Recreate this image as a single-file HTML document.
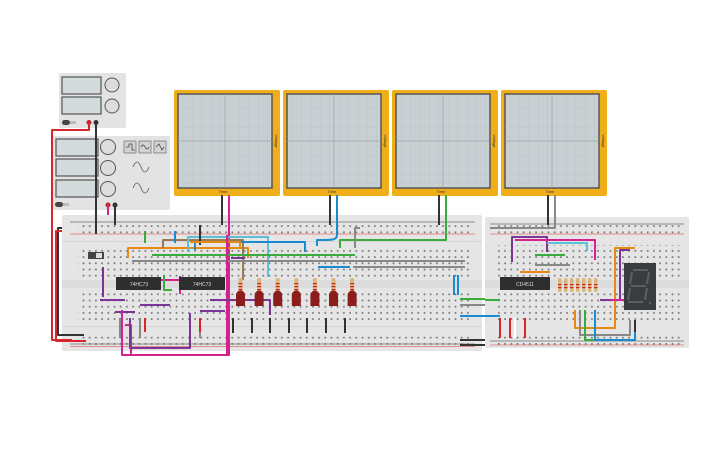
<!DOCTYPE html>
<html><head><meta charset="utf-8"><style>
html,body{margin:0;padding:0;background:#fff;width:725px;height:453px;overflow:hidden}
svg{display:block}
text{font-family:"Liberation Sans",sans-serif}
</style></head><body>
<svg width="725" height="453" viewBox="0 0 725 453" xmlns="http://www.w3.org/2000/svg">
<defs>
<pattern id="h" x="0" y="0" width="6.2" height="6.2" patternUnits="userSpaceOnUse"><rect x="2.1" y="2.1" width="1.6" height="1.6" fill="#6a6a6a"/></pattern>
<pattern id="g" x="0" y="0" width="9.4" height="9.4" patternUnits="userSpaceOnUse"><path d="M9.4 0V9.4H0" fill="none" stroke="#b2bbbd" stroke-width="0.5"/></pattern>
<g id="scope">
<rect x="0" y="0" width="106" height="106" rx="2" fill="#f0ae19"/>
<rect x="4" y="4" width="94" height="94" fill="#c8d0d3" stroke="#555" stroke-width="1.5"/>
<rect x="4" y="4" width="94" height="94" fill="url(#g)"/>
<path d="M51 4V98M4 51H98" stroke="#98a3a6" stroke-width="0.7"/>
<text x="49" y="103" font-size="4" fill="#333" text-anchor="middle">Time</text>
<text x="101" y="51" font-size="4" fill="#333" transform="rotate(90 101 51)" text-anchor="middle">Voltage</text>
</g>
</defs>

<!-- power supply -->
<rect x="59" y="73" width="67" height="55" rx="2" fill="#e3e3e3"/>
<rect x="62" y="77" width="39" height="17" fill="#d3dbdd" stroke="#555" stroke-width="1.2"/>
<rect x="62" y="97" width="39" height="17" fill="#d3dbdd" stroke="#555" stroke-width="1.2"/>
<circle cx="112" cy="85" r="7" fill="#ddd" stroke="#555"/>
<circle cx="112" cy="106" r="7" fill="#ddd" stroke="#555"/>
<rect x="62" y="120" width="8" height="5" rx="2.5" fill="#444"/><rect x="70" y="121" width="6" height="3" fill="#bbb"/>
<circle cx="89" cy="122.5" r="2.5" fill="#c0272d"/><circle cx="96" cy="122.5" r="2.5" fill="#333"/>

<!-- function generator -->
<rect x="52" y="136" width="118" height="74" rx="2" fill="#e3e3e3"/>
<rect x="56" y="139" width="42" height="17" fill="#d3dbdd" stroke="#555" stroke-width="1.2"/>
<rect x="56" y="159" width="42" height="17" fill="#d3dbdd" stroke="#555" stroke-width="1.2"/>
<rect x="56" y="180" width="42" height="17" fill="#d3dbdd" stroke="#555" stroke-width="1.2"/>
<circle cx="108" cy="147" r="7.5" fill="#ddd" stroke="#555"/>
<circle cx="108" cy="168" r="7.5" fill="#ddd" stroke="#555"/>
<circle cx="108" cy="189" r="7.5" fill="#ddd" stroke="#555"/>
<rect x="124" y="141" width="12" height="12" fill="#d3d3d3" stroke="#777" stroke-width="0.8"/>
<rect x="139" y="141" width="12" height="12" fill="#d3d3d3" stroke="#777" stroke-width="0.8"/>
<rect x="154" y="141" width="12" height="12" fill="#d3d3d3" stroke="#777" stroke-width="0.8"/>
<path d="M126 147h3v-3h3v6h3M141 147q2-4 4 0t4 0M156 147l3-3 3 6 2-3" fill="none" stroke="#444" stroke-width="0.8"/>
<path d="M133 167q4-10 8 0t8 0M133 188q4-10 8 0t8 0" fill="none" stroke="#555" stroke-width="0.8"/>
<rect x="55" y="202" width="8" height="5" rx="2.5" fill="#444"/><rect x="63" y="203" width="6" height="3" fill="#bbb"/>
<circle cx="108" cy="205" r="2.5" fill="#c0272d"/><circle cx="115" cy="205" r="2.5" fill="#333"/>

<!-- scopes -->
<use href="#scope" x="174" y="90"/>
<use href="#scope" x="283" y="90"/>
<use href="#scope" x="392" y="90"/>
<use href="#scope" x="501" y="90"/>

<!-- breadboard 1 -->
<rect x="62" y="215" width="420" height="136" rx="2" fill="#e5e5e5"/>
<rect x="62" y="241" width="420" height="1" fill="#d5d5d5"/>
<rect x="62" y="280" width="420" height="8" fill="#dcdcdc"/>
<rect x="62" y="326" width="420" height="1" fill="#d5d5d5"/>
<path d="M70 222H475M70 344H475" stroke="#333" stroke-width="0.6"/>
<path d="M70 234H475M70 346.5H475" stroke="#d33" stroke-width="0.6"/>
<rect x="78" y="222" width="392" height="12" fill="url(#h)"/>
<rect x="78" y="246" width="392" height="31" fill="url(#h)"/>
<rect x="78" y="289" width="392" height="31" fill="url(#h)"/>
<rect x="78" y="333" width="392" height="12" fill="url(#h)"/>

<!-- breadboard 2 -->
<rect x="485" y="217" width="204" height="131" rx="2" fill="#e5e5e5"/>
<rect x="485" y="280" width="204" height="8" fill="#dcdcdc"/>
<path d="M490 224H684M490 341H684" stroke="#333" stroke-width="0.6"/>
<path d="M490 234H684M490 345H684" stroke="#d33" stroke-width="0.6"/>
<rect x="495" y="222" width="185" height="12" fill="url(#h)"/>
<rect x="495" y="245" width="185" height="32" fill="url(#h)"/>
<rect x="495" y="290" width="185" height="32" fill="url(#h)"/>
<rect x="495" y="334" width="185" height="12" fill="url(#h)"/>

<g fill="none" stroke-width="2" stroke-linejoin="round">
<!-- supply wires -->
<path d="M89 122v8H52v210h20" stroke="#d8262d"/>
<path d="M96 122v112" stroke="#333"/>
<path d="M108 205v150h-80" stroke="#d4238f" opacity="0"/>
<path d="M108 205v10" stroke="#d4238f"/>
<path d="M115 205v20" stroke="#333"/>
<path d="M62 228H58v107h26" stroke="#333"/>
<path d="M62 231H56v110h30" stroke="#d8262d"/>
<!-- scope probes -->
<path d="M222 195v30" stroke="#333"/><path d="M229 195v160h-98v-30h-6" stroke="#d4238f"/>
<path d="M330 195v30" stroke="#333"/><path d="M337 195v40c0 5-5 5-15 5h-5v6" stroke="#1b8ad0"/>
<path d="M439 195v30" stroke="#333"/><path d="M446 195v45H340v8" stroke="#3aab3d"/>
<path d="M548 195v30" stroke="#333"/><path d="M555 195v33H490" stroke="#888"/>
<!-- colored jumpers bb1 -->
<path d="M128 258v-10h120v10" stroke="#e88a12"/>
<path d="M163 248v-8h80v40" stroke="#9a7a55"/>
<path d="M188 252v-15h80v40" stroke="#5bbfd8"/>
<path d="M195 250v-8h110v10" stroke="#1b8ad0"/>
<path d="M145 231v12" stroke="#3aab3d"/>
<path d="M175 231v12" stroke="#1b8ad0"/>
<path d="M200 225v20" stroke="#333"/>
<path d="M152 255H355" stroke="#3aab3d"/>
<path d="M132 261H355" stroke="#888"/>
<path d="M355 261H465" stroke="#888"/>
<path d="M318 267H350" stroke="#1b8ad0"/>
<path d="M353 267H465" stroke="#888"/>
<path d="M355 248v-20h5" stroke="#888"/>
<path d="M240 247v-5h-50" stroke="#e88a12"/>
<path d="M103 267v30" stroke="#7b3596"/>
<path d="M100 300h25M140 305h30M200 311h25M115 312h20" stroke="#7b3596"/>
<path d="M130 318v30h60v-35" stroke="#7b3596"/>
<path d="M122 310v45h105v-120" stroke="#d4238f"/>
<path d="M120 318v20M140 318v20M200 318v20" stroke="#888"/>
<path d="M145 318v14M200 318v14" stroke="#d8262d"/>
<path d="M160 280h20M180 276v18" stroke="#d4238f"/>
<path d="M164 275v15h8" stroke="#3aab3d"/>
<path d="M231 258H245" stroke="#7b3596"/>
<path d="M210 300H270v15" stroke="#7b3596"/>
<path d="M233 318v15M252 318v15M270 318v15M289 318v15M307 318v15M326 318v15M345 318v15" stroke="#333"/>
<path d="M454 275v20M458 275v20" stroke="#1b8ad0"/>
<path d="M460 299h25M460 305h25M460 316h25" stroke="#3aab3d"/>
<path d="M460 305h25" stroke="#888"/>
<path d="M460 316h25" stroke="#1b8ad0"/>
<path d="M460 340h25M460 345h25" stroke="#333"/>
<!-- bb2 wires -->
<path d="M512 262v-25h35v15" stroke="#7b3596"/>
<path d="M515 240h80v20" stroke="#d4238f"/>
<path d="M547 243h40v8" stroke="#5bbfd8"/>
<path d="M535 255h30" stroke="#3aab3d"/>
<path d="M535 265h35" stroke="#888"/>
<path d="M520 272h30" stroke="#e88a12"/>
<path d="M575 310v18h40v-80h20" stroke="#e88a12"/>
<path d="M580 310v25h50v-15" stroke="#888"/>
<path d="M585 310v30h45" stroke="#3aab3d"/>
<path d="M595 310v30h40v-20" stroke="#1b8ad0"/>
<path d="M600 300h20v-50h10" stroke="#7b3596"/>
<path d="M610 300h15" stroke="#d4238f"/>
<path d="M635 320v12" stroke="#333"/>
<path d="M500 318v20M510 318v20M525 318v20" stroke="#d8262d"/>
<path d="M515 318v20" stroke="#fff"/>
<path d="M485 300h15" stroke="#3aab3d"/>
<path d="M485 316h15" stroke="#1b8ad0"/>
</g>

<!-- switch -->
<rect x="88" y="252" width="16" height="7" fill="#444"/><rect x="96" y="253" width="6" height="5" fill="#ddd"/>

<!-- chips -->
<rect x="116" y="277" width="45" height="13" fill="#2e2e2e"/>
<text x="139" y="286" font-size="5" fill="#ddd" text-anchor="middle">74HC73</text>
<rect x="179" y="277" width="46" height="13" fill="#2e2e2e"/>
<text x="202" y="286" font-size="5" fill="#ddd" text-anchor="middle">74HC73</text>
<rect x="500" y="277" width="50" height="13" fill="#2e2e2e"/>
<text x="525" y="286" font-size="5" fill="#ddd" text-anchor="middle">CD4511</text>

<!-- resistors & LEDs -->
<g>
<g id="rl">
<rect x="238.5" y="278" width="4" height="15" rx="1.5" fill="#d9b77c"/>
<rect x="238.5" y="283" width="4" height="1.2" fill="#c22"/><rect x="238.5" y="286" width="4" height="1.2" fill="#c22"/><rect x="238.5" y="289" width="4" height="1.2" fill="#c22"/>
<path d="M236 295a4.5 4.5 0 0 1 9 0v11h-9z" fill="#8b1d1d"/>
</g>
<use href="#rl" x="18.6"/><use href="#rl" x="37.2"/><use href="#rl" x="55.8"/><use href="#rl" x="74.4"/><use href="#rl" x="93"/><use href="#rl" x="111.6"/>
</g>
<g id="r2"><rect x="558" y="278" width="3.5" height="14" rx="1.5" fill="#d9b77c"/><rect x="558" y="284" width="3.5" height="1.2" fill="#c22"/><rect x="558" y="287" width="3.5" height="1.2" fill="#c22"/></g>
<use href="#r2" x="6"/><use href="#r2" x="12"/><use href="#r2" x="18"/><use href="#r2" x="24"/><use href="#r2" x="30"/><use href="#r2" x="36"/>

<!-- 7 seg -->
<rect x="624" y="263" width="32" height="47" fill="#3a3d3f"/>
<path d="M633 270h15M632 272l-2 12M649 272l-2 12M631 286h15M630 288l-2 12M647 288l-2 12M628 302h15" stroke="#5d6062" stroke-width="2"/>
<circle cx="650" cy="303" r="1.3" fill="#5d6062"/>
</svg>
</body></html>
